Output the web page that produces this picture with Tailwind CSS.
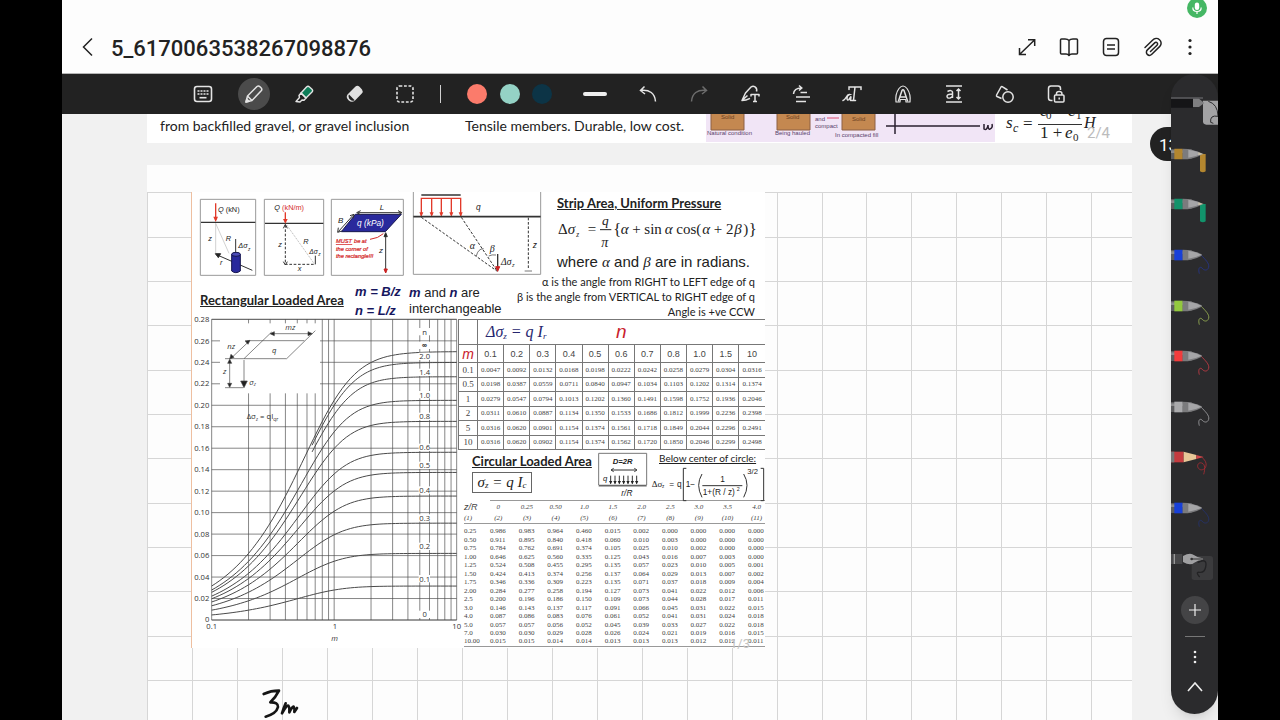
<!DOCTYPE html>
<html lang="en">

<head>
    <meta charset="UTF-8" />
    <meta name="viewport" content="width=device-width, initial-scale=1.0" />
    <script src="https://cdn.jsdelivr.net/npm/@tailwindcss/browser@4"></script>
    <title>5_6170063538267098876</title>
</head>

<body class="bg-black px-[62px] font-['Roboto',sans-serif]">
    <div class="relative flex h-screen flex-col overflow-hidden bg-[#f1f1f1]">

        <!-- Title bar -->
        <header class="relative flex h-[74px] shrink-0 items-center border-b border-[#b5b5b5] bg-[#fdfdfd] pt-5 pr-[21px] pl-3">
            <button class="flex size-7 items-center justify-center" aria-label="Back">
                <svg class="size-6" viewBox="0 0 24 24" fill="none" stroke="#222" stroke-width="1.5"><path d="M16 3.500 7.500 12l8.500 8.500" /></svg>
            </button>
            <h1 class="mt-1 ml-[9px] text-[22px] font-medium text-[#222]">5_6170063538267098876</h1>
            <div class="ml-auto flex items-center gap-[18px] text-[#222]">
                <button class="size-6" aria-label="Full screen">
                    <svg viewBox="0 0 24 24" fill="none" stroke="currentColor" stroke-width="1.5"><path d="M4.500 19.500 19.500 5M13 4.700h6.700V11M11 19.500H4.500V13" /></svg>
                </button>
                <button class="size-6" aria-label="Reading view">
                    <svg viewBox="0 0 24 24" fill="none" stroke="currentColor" stroke-width="1.500" stroke-linejoin="round"><path d="M12 5.500C11 4.300 9.500 4 8 4H4.500Q3.500 4 3.500 5v13q0 1 1 1H9q2 0 3 1.500Q13 19 15 19h4.500q1 0 1-1V5q0-1-1-1H16c-1.500 0-3 .3-4 1.500zM12 5.500v15" /></svg>
                </button>
                <button class="size-6" aria-label="Pages">
                    <svg viewBox="0 0 24 24" fill="none" stroke="currentColor" stroke-width="1.500"><rect x="4.500" y="3.500" width="15" height="17" rx="3" /><path d="M8 10h8M8 14h8" /></svg>
                </button>
                <button class="size-6" aria-label="Attach">
                    <svg viewBox="0 0 24 24" fill="none" stroke="currentColor" stroke-width="1.500" stroke-linecap="round"><path d="m4 12.500 7.500-7.300c2-2 5-2.200 7-.5s2.200 4.800.3 6.700l-8 7.800c-1.300 1.300-3.300 1.400-4.500.2s-1.200-3.200.1-4.500l7.300-7c.7-.7 1.800-.8 2.400-.1.700.7.600 1.700-.1 2.400L9.500 16.500" /></svg>
                </button>
                <button class="h-6 w-[14px]" aria-label="More options">
                    <svg class="h-6 w-[14px]" viewBox="0 0 14 24" fill="currentColor"><circle cx="7" cy="5.500" r="1.600" /><circle cx="7" cy="12" r="1.600" /><circle cx="7" cy="18.500" r="1.600" /></svg>
                </button>
            </div>
            <!-- Microphone in use -->
            <svg class="absolute -top-0.5 right-[11px] size-5" viewBox="0 0 20 20"><circle cx="10" cy="10" r="10" fill="#45b764" /><rect x="7.800" y="4.500" width="4.400" height="7.500" rx="2.200" fill="#fff" /><path d="M5.800 9.500q0 4 4.200 4t4.200-4M10 13.500V16" fill="none" stroke="#fff" stroke-width="1.200" /></svg>
        </header>

        <!-- Tools -->
        <nav class="flex h-10 shrink-0 items-center bg-[#222] pl-[125px] text-[#e4e4e4]">
            <div class="flex w-[234px] justify-between">
                <button class="flex size-8 items-center justify-center" aria-label="Keyboard">
                    <svg class="size-5" viewBox="0 0 20 20" fill="none" stroke="currentColor" stroke-width="1.600"><rect x="1.500" y="2.500" width="17" height="15" rx="2.500" /><path d="M4.500 7h11M4.500 10h11" stroke-dasharray="2 1" stroke-width="1.400" /><path d="M6.500 13.700h7" /></svg>
                </button>
                <button class="flex size-8 items-center justify-center rounded-full bg-[#4b4b4b]" aria-label="Pen">
                    <svg class="size-5" viewBox="0 0 20 20" fill="none" stroke="currentColor" stroke-width="1.500" stroke-linejoin="round"><path d="m2 18 1.500-6L13 2.500q1.500-1.200 3 .3l1 1q1.500 1.500.2 3L8 16.500zM3.500 12 8 16.500" /><path d="m2 18 .8-3 2.200 2.200z" fill="currentColor" /></svg>
                </button>
                <button class="flex size-8 items-center justify-center" aria-label="Highlighter">
                    <svg class="size-5" viewBox="0 0 20 20" stroke="currentColor" stroke-width="1.400" stroke-linejoin="round"><path d="m7 9 5.500-6q1.500-1.300 3 0L18 5.200q1.300 1.300 0 2.800l-6 6z" fill="#0d7d58" /><path d="m7 9-2 2.500.5 2L2 17.500l4 .5 2-2 2 .3 2-2.300z" fill="none" /></svg>
                </button>
                <button class="flex size-8 items-center justify-center" aria-label="Eraser">
                    <svg class="size-5" viewBox="0 0 20 20"><path d="m2.500 10.500 8-8q2-1.500 4 .3l2.500 2.700q1.500 2-.2 4l-7.300 7.500q-3 2-6-.8t-1-5.700z" fill="#e0e0e0" /><path d="m4 10.500 5.700 5.700q-2.400 1.400-4.700-.8T4 10.500z" fill="#222" /></svg>
                </button>
                <button class="flex size-8 items-center justify-center" aria-label="Select">
                    <svg class="size-5" viewBox="0 0 20 20" fill="none" stroke="currentColor" stroke-width="1.600"><rect x="2" y="2" width="16" height="16" rx="2.500" stroke-dasharray="2.800 1.700" /></svg>
                </button>
            </div>
            <span class="ml-[19px] h-[18px] w-px bg-[#d0d0d0]"></span>
            <div class="ml-[26px] flex w-[85px] justify-between">
                <button class="size-5 rounded-full bg-[#fb7b6b]" aria-label="Coral"></button>
                <button class="size-5 rounded-full bg-[#94d2c5]" aria-label="Mint"></button>
                <button class="size-5 rounded-full bg-[#0c3446]" aria-label="Navy"></button>
            </div>
            <button class="ml-[31px] h-1 w-6 rounded-full bg-[#eee]" aria-label="Thickness"></button>
            <div class="ml-[25px] flex w-[440px] justify-between">
                <button class="flex size-8 items-center justify-center" aria-label="Undo">
                    <svg class="size-5" viewBox="0 0 20 20" fill="none" stroke="currentColor" stroke-width="1.500"><path d="M6.500 2.500 2.500 6.500l4.500 3.500M2.500 6.500Q16.500 5 17.500 17.500" /></svg>
                </button>
                <button class="flex size-8 items-center justify-center text-[#6d6d6d]" aria-label="Redo">
                    <svg class="size-5" viewBox="0 0 20 20" fill="none" stroke="currentColor" stroke-width="1.500"><path d="m13.500 2.500 4 4L13 10M17.500 6.500Q3.500 5 2.500 17.500" /></svg>
                </button>
                <button class="flex size-8 items-center justify-center" aria-label="Handwriting to text">
                    <svg class="size-5" viewBox="0 0 20 20" fill="none" stroke="currentColor" stroke-width="1.500" stroke-linejoin="round"><path d="M16.500 7.500q1-3-1.500-4.700-2-1.300-4 .2L5.500 9 2 16.500q4 0 8-2.200M2 16.500l5.500-5" /><path d="M11 12.500v-2h8v2M15 10.500v7M13 17.500h4" /></svg>
                </button>
                <button class="flex size-8 items-center justify-center" aria-label="Straighten">
                    <svg class="size-5" viewBox="0 0 20 20" fill="none" stroke="currentColor" stroke-width="1.500"><path d="M2.500 10q.5-6 8-6M8 1.500 10.800 4 8 6.500M9.500 8.500H16M5 13h14M5 17.500h10" /></svg>
                </button>
                <button class="flex size-8 items-center justify-center" aria-label="Text style">
                    <svg class="size-5" viewBox="0 0 20 20" fill="none" stroke="currentColor" stroke-width="1.500" stroke-linecap="round"><path d="M7 5.500V3h12v2.500M13 3l-1.500 13.500M9.500 16.500h4" /><path d="M1 16.500q1.500-.3 3-3Q6 10 7.500 10.500 5 11 5 14q0 3 2 1.500l2-3-.5 4" /></svg>
                </button>
                <button class="flex size-8 items-center justify-center" aria-label="Outline text">
                    <svg class="size-5" viewBox="0 0 20 20" fill="none" stroke="currentColor" stroke-linejoin="round"><path d="M3 18Q2 10 6 4.500q4-5 8 0Q18 10 17 18h-4l-.3-2.500H7.300L7 18z" stroke-width="1.200" /><path d="M5.300 17.500 9 6.500q1-1.500 2 0l3.700 11M6.500 13h7" stroke-width="1.500" /></svg>
                </button>
                <button class="flex size-8 items-center justify-center" aria-label="Line spacing">
                    <svg class="size-5" viewBox="0 0 20 20" fill="none" stroke="currentColor" stroke-width="1.500"><path d="M2 2h16M2 18h16M14.500 5v10M12.500 7l2-2 2 2M12.500 13l2 2 2-2" /><path d="M3.500 7.500q4-2 5 .5v6M8.500 10q-5.500 0-5.500 2.300t3 1.700q2-.5 2.500-2" /></svg>
                </button>
                <button class="flex size-8 items-center justify-center" aria-label="Shapes">
                    <svg class="size-5" viewBox="0 0 20 20" fill="none" stroke="currentColor" stroke-width="1.500" stroke-linejoin="round"><circle cx="13" cy="13" r="5.200" /><path d="M6.500 14.500 2 12.500q-.8-.5-.4-1.500L6 3q.8-1 1.600-.2L12.500 6" /></svg>
                </button>
                <button class="flex size-8 items-center justify-center" aria-label="Lock canvas">
                    <svg class="size-5" viewBox="0 0 20 20" fill="none" stroke="currentColor" stroke-width="1.500" stroke-linejoin="round"><path d="M6.500 16.500H5q-2.500 0-2.500-2.500V4.500Q2.500 2 5 2h7q2.500 0 2.500 2.500V6" /><rect x="8.500" y="11" width="9.500" height="7" rx="1" /><path d="M10.500 11V9.500q0-2 2.700-2t2.700 2V11M13.200 13.500v2" /></svg>
                </button>
            </div>
        </nav>

        <main class="flex flex-1 flex-col gap-[22px] overflow-hidden pr-[86px] pl-[85px]">

            <!-- End of the page before -->
            <section class="flex h-[29px] shrink-0 overflow-hidden bg-white pl-[13px] font-['Lato',sans-serif] text-[14px] leading-6 text-[#222]">
                <p class="w-[305px]">from backfilled gravel, or gravel inclusion</p>
                <p class="w-[241px]">Tensile members. Durable, low cost.</p>
                <svg class="h-[29px] w-[289px]" viewBox="0 0 289 29" font-family="Liberation Sans" font-size="6" fill="#57416b">
                    <rect width="289" height="28" fill="#f1e5f6" />
                    <g fill="#c48850" stroke="#8d6044"><path d="M5 -2h33v18H5zM71 -2h33v18H71zM136 -2h33v18h-33z" /></g>
                    <g fill="#6b3f21"><text x="15" y="5">Solid</text><text x="80" y="5">Solid</text><text x="146" y="7">Solid</text></g>
                    <text x="1" y="21">Natural condition</text>
                    <text x="69" y="21">Being hauled</text>
                    <text x="109" y="7">and</text>
                    <text x="109" y="14">compact</text>
                    <text x="129" y="23">In compacted fill</text>
                    <path d="M121 4h12" stroke="#dc4c72" />
                    <path d="M189 0v20M180 12h94" fill="none" stroke="#2a2030" stroke-width="1.500" />
                    <path d="M278 10v5q3 2 4-4 0 5 2 4 3-1 2-5" fill="none" stroke="#2a2030" stroke-width="1.500" />
                </svg>
                <svg class="h-[29px] w-[118px]" viewBox="0 0 118 29" font-family="Liberation Serif" font-size="17" fill="#222">
                    <text x="11" y="14" font-style="italic">s</text><text x="18" y="18" font-style="italic" font-size="12">c</text><text x="28" y="15">=</text>
                    <path d="M43 10.500h44" stroke="#333" />
                    <text x="45" y="2" font-style="italic">e</text><text x="51" y="5" font-size="11">0</text>
                    <text x="73" y="2" font-style="italic">e</text><text x="81" y="5" font-size="11">1</text>
                    <text x="45" y="24">1 +</text><text x="70" y="24" font-style="italic">e</text><text x="78" y="27" font-size="11">0</text>
                    <text x="89" y="14" font-size="16" font-style="italic">H</text>
                    <text x="92" y="24" font-size="15" font-family="Roboto" fill="#bcbcbc">2/4</text>
                </svg>
            </section>

            <!-- Ruled page -->
            <section class="relative flex-1 overflow-hidden bg-[#fdfdfd] pt-[27px] pl-[44px]">
                <svg class="absolute inset-0 h-full w-full" fill="none" stroke="#d6d6d6">
                    <path d="M0 27.500H2000M0 72.500H2000M0 116.500H2000M0 160.500H2000M0 205.500H2000M0 249.500H2000M0 293.500H2000M0 338.500H2000M0 382.500H2000M0 426.500H2000M0 471.500H2000M0 515.500H2000" />
                    <path d="M.5 27V900M45.500 27V900M90.500 27V900M135.500 27V900M180.500 27V900M225.500 27V900M270.500 27V900M315.500 27V900M360.500 27V900M405.500 27V900M450.500 27V900M495.500 27V900M540.500 27V900M585.500 27V900M630.500 27V900M675.500 27V900M719.500 27V900M764.500 27V900M809.500 27V900M854.500 27V900M899.500 27V900M944.500 27V900" />
                </svg>

                <article class="relative h-[456px] w-[574px] border-l border-[#eebfa0] bg-white font-['Liberation_Sans',sans-serif] text-[#222]">
                    <div class="flex h-[82px]">
                        <!-- Point, line and rectangular loads -->
                        <svg class="h-[84px] w-[216px]" viewBox="6 21 648 252" fill="none" stroke="#333" stroke-width="3" font-size="22">
                            <g stroke="#999"><path d="M31 43h166v228H31zM223 43h178v228H223zM424 43h216v228H424z" /></g>
                            <path d="M33 112h163M225 115h175" stroke-width="4" />
                            <path d="M77 55v50" stroke="#e23a2a" stroke-width="4" /><path d="m70 95 7 16 7-16z" fill="#e23a2a" stroke="none" />
                            <path d="M77 115v90M77 115l40 90" stroke="#bbb" stroke-width="2" />
                            <path d="m82 210 105 46M137 162v50" /><path d="m76 206 16 0-7 12z" fill="#222" />
                            <path d="M125 208v50q12 10 26 0v-50z" fill="#29299c" stroke="#16164e" /><ellipse cx="138" cy="208" rx="13" ry="6" fill="#4c4cb8" stroke="#16164e" />
                            <path d="M286 82v28" stroke="#e23a2a" stroke-width="4" /><path d="m279 102 7 14 7-14z" fill="#e23a2a" stroke="none" />
                            <path d="M286 120v118h90" stroke-dasharray="8 5" /><path d="m290 120 84 118" stroke="#888" stroke-width="2" stroke-dasharray="3 3" /><path d="M376 212v26M280 130l6-12 6 12M280 230l6 10 6-10" />
                            <path d="M496 88h138l-48 52H454z" fill="#29299c" stroke="#16164e" />
                            <path d="M503 83h130M490 90l-45 50" /><path d="m512 77-12 6 12 6M624 77l12 6-12 6M480 92l12-4-2 12M445 128l-2 14 12-4" />
                            <path d="M587 145v118" /><path d="m582 155 5-12 5 12z" fill="#222" /><path d="m582 252 5 12 5-12z" fill="#c22" stroke="#c22" />
                            <path d="M540 163q25-3 40-17" stroke="#d42a2a" />
                            <g fill="#222" stroke="none" font-style="italic">
                                <text x="84" y="80">Q <tspan font-style="normal">(kN)</tspan></text><text x="55" y="168">z</text><text x="107" y="169">R</text><text x="145" y="190">Δσ</text><text x="174" y="197" font-size="14">z</text><text x="90" y="240">r</text>
                                <text x="253" y="75">Q <tspan fill="#d42a2a" font-style="normal">(kN/m)</tspan></text><text x="265" y="187">z</text><text x="340" y="178">R</text><text x="358" y="207" font-size="20">Δσ</text><text x="385" y="212" font-size="14">z</text><text x="323" y="258">x</text>
                                <text x="569" y="74" font-size="24">L</text><text x="444" y="113" font-size="24">B</text><text x="501" y="124" fill="#fff" font-size="25">q (kPa)</text><text x="567" y="205" font-size="24">z</text>
                            </g>
                            <g fill="#d42a2a" stroke="#d42a2a" stroke-width=".7" font-size="17" font-style="italic"><text x="438" y="175" text-decoration="underline">MUST</text><text x="492" y="175">be at</text><text x="438" y="197">the corner of</text><text x="438" y="219">the rectangle!!!</text></g>
                        </svg>
                        <!-- Strip load -->
                        <svg class="ml-1 h-[84px] w-[130px]" viewBox="24 21 390 252" fill="none" stroke="#333" stroke-width="3" font-family="Liberation Sans" font-size="25">
                            <path d="M28 21v247h382V21" stroke="#999" />
                            <path d="M52 30h118" stroke-width="4" />
                            <path d="M52 95V40h118v55M83 40v50M112 40v50M142 40v50" stroke="#e23a2a" stroke-width="4" />
                            <path d="m46 82 6 14 6-14zM77 82l6 14 6-14zM106 82l6 14 6-14zM136 82l6 14 6-14zM164 82l6 14 6-14z" fill="#e23a2a" stroke="none" />
                            <path d="M28 95h382" stroke-width="5" />
                            <path d="m52 97 228 162M172 97l108 162M373 98v155" stroke-dasharray="8 5" /><path d="M362 258h22M217 213q5-22 22-22M254 213q10-5 22-3" stroke-width="2" />
                            <path d="M281 207v40" stroke-width="4" /><path d="m275 245 6 14 6-14z" fill="#c22" stroke="#c22" />
                            <g fill="#222" stroke="none" font-style="italic"><text x="216" y="76">q</text><text x="386" y="188">z</text><text x="197" y="192" font-family="Liberation Serif" font-size="30">α</text><text x="257" y="200" font-family="Liberation Serif" font-size="30">β</text><text x="291" y="240" font-family="Liberation Serif" font-size="29">Δσ</text><text x="324" y="246" font-size="15">z</text></g>
                        </svg>
                        <div class="ml-[15px] w-[200px] shrink-0">
                            <h2 class="font-['Lato',sans-serif] text-[13px] leading-[22px] font-bold whitespace-nowrap underline">Strip Area, Uniform Pressure</h2>
                            <svg class="h-[36px] w-[204px]" viewBox="455 86 612 108" fill="#222" font-family="Liberation Serif" font-size="45">
                                <text x="458" y="146">Δ<tspan font-style="italic">σ</tspan></text><text x="513" y="156" font-size="22" font-style="italic">z</text><text x="547" y="146">=</text>
                                <text x="590" y="118" font-size="40" font-style="italic">q</text><path d="M584 133h34" stroke="#222" stroke-width="3" /><text x="588" y="184" font-size="42" font-style="italic">π</text>
                                <text x="624" y="148" font-size="50">{</text><text x="646" y="146" font-style="italic">α</text><text x="681" y="146">+</text><text x="717" y="146">sin</text><text x="778" y="146" font-style="italic">α</text><text x="813" y="146">cos(</text><text x="891" y="146" font-style="italic">α</text><text x="925" y="146">+</text><text x="962" y="146">2</text><text x="987" y="146" font-style="italic">β</text><text x="1014" y="146">)</text><text x="1030" y="148" font-size="50">}</text>
                            </svg>
                            <p class="text-[15px] leading-6 whitespace-nowrap">where <i class="font-['Liberation_Serif',serif]">α</i> and <i class="font-['Liberation_Serif',serif]">β</i> are in radians.</p>
                        </div>
                    </div>

                    <div class="flex h-[45px]">
                        <div class="flex items-center pt-2 pl-2 whitespace-nowrap">
                            <h2 class="w-[155px] font-['Lato',sans-serif] text-[13px] font-bold underline">Rectangular Loaded Area</h2>
                            <p class="w-[54px] text-[13px] leading-[19px] font-bold text-[#16165e] italic">m = B/z<br />n = L/z</p>
                            <p class="w-[90px] text-[13px] leading-[16px]"><b class="text-[#16165e] italic">m</b> and <b class="text-[#16165e] italic">n</b> are<br />interchangeable</p>
                        </div>
                        <p class="ml-auto pr-[10px] text-right font-['Lato',sans-serif] text-[11px] leading-[15px] whitespace-nowrap">α is the angle from RIGHT to LEFT edge of q<br />β is the angle from VERTICAL to RIGHT edge of q<br />Angle is +ve CCW</p>
                    </div>

                    <div class="flex">
                        <svg id="chart" class="h-[329px] w-[266px] overflow-visible" viewBox="6 27 798 987" fill="none" stroke="#4a4a4a" stroke-width="2" font-family="Open Sans" font-size="23"></svg>

                        <div class="w-[307px]">
                            <table class="h-[131px] w-full table-fixed border-collapse text-center font-['Liberation_Serif',serif] text-[7px] leading-[10px] text-[#444]">
                                <thead>
                                    <tr class="h-[25px]">
                                        <td class="w-[19px] border border-[#777]"></td>
                                        <td colspan="11" class="border-y border-[#777] font-['Liberation_Sans',sans-serif]">
                                            <div class="flex items-center pl-2 text-[16px] leading-5 italic">
                                                <span class="w-[130px] text-left font-['Liberation_Serif',serif] text-[#26266e]">Δσ<sub class="text-[9px]">z</sub> = q I<sub class="text-[9px]">r</sub></span>
                                                <span class="text-[19px] text-[#c9202c]">n</span>
                                            </div>
                                        </td>
                                    </tr>
                                    <tr id="rect-head" class="h-[18px] font-['Liberation_Sans',sans-serif] text-[9px]"></tr>
                                </thead>
                                <tbody id="rect-body"></tbody>
                            </table>

                            <div class="flex h-[50px]">
                                <div class="w-[137px] pl-[14px]">
                                    <h2 class="font-['Lato',sans-serif] text-[13px] leading-[22px] font-bold whitespace-nowrap underline">Circular Loaded Area</h2>
                                    <p class="flex h-[21px] w-[60px] items-center justify-center border border-[#666] font-['Liberation_Serif',serif] text-[15px] whitespace-nowrap italic">σ<sub class="text-[9px]">z</sub>&nbsp;= q I<sub class="text-[9px]">c</sub></p>
                                </div>
                                <svg class="h-[50px] w-[56px]" viewBox="420 0 168 150" fill="none" stroke="#333" stroke-width="3" font-family="Liberation Sans" font-size="23" font-style="italic">
                                    <path d="M431 105V10h144v95" stroke="#777" /><path d="M431 107h144" stroke-width="5" stroke="#666" />
                                    <path d="M470 60h72" /><path d="m476 55-8 5 8 5M538 55l8 5-8 5" />
                                    <path d="M467 77v24M480 77v24M493 77v24M506 77v24M519 77v24M532 77v24M545 77v24" />
                                    <path d="m462 93 5 10 5-10zM475 93l5 10 5-10zM488 93l5 10 5-10zM501 93l5 10 5-10zM514 93l5 10 5-10zM527 93l5 10 5-10zM540 93l5 10 5-10z" fill="#222" stroke="none" />
                                    <g fill="#222" stroke="none"><text x="473" y="43" font-weight="bold">D=2R</text><text x="444" y="92">q</text><text x="499" y="138" font-size="25">r/R</text></g>
                                </svg>
                                <div class="w-[114px] shrink-0">
                                    <h3 class="pl-2 font-['Lato',sans-serif] text-[10px] leading-[17px] whitespace-nowrap underline">Below center of circle:</h3>
                                    <svg class="h-[36px] w-[114px]" viewBox="588 46 342 108" fill="#222" font-family="Liberation Sans" font-size="25">
                                        <text x="590" y="105" font-family="Liberation Serif" font-size="27">Δσ</text><text x="621" y="110" font-size="14">z</text><text x="643" y="105">=</text><text x="666" y="105">q</text>
                                        <path d="M694 50h-9v97h9M917 50h9v97h-9M741 67q-20 33 0 70M866 67q20 33 0 70M742 102h120" fill="none" stroke="#333" stroke-width="3" />
                                        <text x="692" y="105">1−</text><text x="796" y="90">1</text><text x="743" y="130">1+(R / z)</text><text x="845" y="118" font-size="16">2</text><text x="877" y="68" font-size="23">3/2</text>
                                    </svg>
                                </div>
                            </div>

                            <div class="pl-[6px]">
                                <table class="w-full table-fixed border-collapse border-b border-[#999] text-left font-['Liberation_Serif',serif] text-[7px] leading-[8px] text-[#444]">
                                    <thead id="circle-head" class="italic"></thead>
                                    <tbody id="circle-body" class="before:block before:h-[3px]"></tbody>
                                </table>
                            </div>
                        </div>
                    </div>
                    <span class="absolute right-[15px] -bottom-1 font-['Roboto',sans-serif] text-[13px] leading-4 text-[#c4c4c4]">1/3</span>
                </article>

                <!-- Handwriting -->
                <svg class="relative mt-10 ml-[70px] h-8 w-10" viewBox="363 144 120 96" fill="none" stroke="#151515" stroke-width="8" stroke-linecap="round" stroke-linejoin="round"><path d="M371 162q22-10 46-10-10 20-26 35 24-1 23 14-5 20-37 29" /><path d="M437 190q-6 14-11 30 14-26 19-23 4 4 3 20 8-16 13-17 4 6 2 16l8-12" /></svg>
            </section>
        </main>

        <!-- Page number -->
        <span class="absolute top-[127px] right-[30px] h-[34px] w-[38px] rounded-full bg-[#222] pl-[9px] text-[17px] leading-9 text-white">13</span>

        <!-- Favourite pens -->
        <aside class="absolute top-[74px] right-0 flex h-[640px] w-[47px] flex-col items-center overflow-hidden rounded-t-3xl rounded-b-[24px] bg-[#2b2b2d] pt-1 text-[#eee] shadow-lg">
            <div id="pens" class="grid h-[506px] w-full shrink-0 grid-rows-10"></div>
            <button class="mt-3 flex size-7 shrink-0 items-center justify-center rounded-full bg-[#444446]" aria-label="Add pen">
                <svg class="size-3" viewBox="0 0 12 12" stroke="currentColor" stroke-width="1.200"><path d="M0 6h12M6 0v12" /></svg>
            </button>
            <span class="mt-3 h-px w-5 shrink-0 bg-[#777]"></span>
            <button class="mt-2.5 size-5 shrink-0" aria-label="More pens">
                <svg viewBox="0 0 20 20" fill="currentColor"><circle cx="10" cy="5" r="1.300" /><circle cx="10" cy="10" r="1.300" /><circle cx="10" cy="15" r="1.300" /></svg>
            </button>
            <button class="mt-2.5 size-5 shrink-0" aria-label="Collapse">
                <svg viewBox="0 0 20 20" fill="none" stroke="currentColor" stroke-width="1.600"><path d="m3 14 7-8 7 8" /></svg>
            </button>
        </aside>
    </div>

    <script>
        // Influence factor under the corner of a rectangle
        function influence(m, n) {
            const a = m * m, b = n * n, v = a + b + 1;
            const t = 2 * m * n * Math.sqrt(v);
            return (t / (v + a * b) * (v + 1) / v + Math.atan2(t, v - a * b)) / (4 * Math.PI);
        }

        const px = m => 65 + (Math.log10(m) + 1) * 367.5;
        const py = i => 930 - i * 3221;

        function drawChart() {
            let html = '<path d="M65 28H800V930H65z" />';
            const text = (x, y, s, more = '') => `<text x="${x}" y="${y}" fill="#333" stroke="none" ${more}>${s}</text>`;

            for (let k = 0; k <= 14; k++) {
                const y = py(k * 0.02);
                html += text(58, y + (k ? 8 : 5), k ? (k * 0.02).toFixed(2) : '0', 'text-anchor="end"');
                html += k > 10 && k < 14 ? `<path d="M65 ${y}h25M390 ${y}H800" />` : `<path d="M65 ${y}H800" />`;
            }
            for (let d = 2; d < 10; d++) {
                const x = px(d / 10);
                html += d < 8 ? `<path d="M${x} 28v12M${x} 250V930" />` : `<path d="M${x} 28V930" />`;
                html += `<path d="M${px(d)} 28V930" />`;
            }
            html += `<path d="M${px(1)} 28V930" />`;

            [0.1, 0.2, 0.3, 0.4, 0.5, 0.6, 0.8, 1, 1.4, 2, 1000].forEach(n => {
                const from = n === 1.4 || n === 2 ? 0.66 : 0.1;
                const points = [];
                for (let s = 0; s <= 60; s++) {
                    const m = from * Math.pow(10 / from, s / 60);
                    points.push(`${px(m).toFixed(1)},${py(influence(m, n)).toFixed(1)}`);
                }
                html += `<polyline points="${points.join(' ')}" stroke-width="3" />`;
            });

            [['n', 66], ['∞', 107], ['2.0', 140], ['1.4', 188], ['1.0', 255], ['0.8', 320], ['0.6', 413], ['0.5', 467], ['0.4', 541], ['0.3', 625], ['0.2', 710], ['0.1', 807], ['0', 914]].forEach(([s, y]) => {
                html += `<path d="M686 ${y - 12}h34v22h-34z" fill="#fff" stroke="none" />` + text(704, y + 8, s, `text-anchor="middle" ${s === '∞' ? 'font-weight="bold"' : ''}`);
            });

            html += text(65, 958, '0.1', 'text-anchor="middle"') + text(435, 958, '1', 'text-anchor="middle"') + text(800, 958, '10', 'text-anchor="middle"');
            html += text(434, 993, 'm', 'text-anchor="middle" font-style="italic"');

            // Loaded rectangle
            html += '<path d="M105 146h185L376 62M162 146l83-80M165 92h178M245 71h118M122 146l55-52M119 150v80M162 150v75M105 233h55" />';
            html += '<path d="m240 71 13-6v12zM367 71l-13-6v12zM119 147l4-14 9 9zM180 91l-14 3 8 9zM119 148l-6 12h12zM119 232l-6-12h12zM162 233l-10-20h20z" fill="#222" />';
            html += text(286, 60, 'mz', 'font-style="italic"') + text(112, 117, 'nz', 'font-style="italic"') + text(246, 130, 'q', 'font-style="italic"') + text(99, 192, 'z', 'font-style="italic"') + text(178, 224, 'σ<tspan font-size="15" dy="4">z</tspan>', 'font-style="italic"');
            html += text(170, 328, 'Δσ<tspan font-size="15" dy="4">z</tspan><tspan dy="-4"> = qI</tspan><tspan font-size="15" dy="4">qr</tspan>');
            document.getElementById('chart').innerHTML = html;
        }

        const rectRows = [
            '0.1 0.0047 0.0092 0.0132 0.0168 0.0198 0.0222 0.0242 0.0258 0.0279 0.0304 0.0316',
            '0.5 0.0198 0.0387 0.0559 0.0711 0.0840 0.0947 0.1034 0.1103 0.1202 0.1314 0.1374',
            '1 0.0279 0.0547 0.0794 0.1013 0.1202 0.1360 0.1491 0.1598 0.1752 0.1936 0.2046',
            '2 0.0311 0.0610 0.0887 0.1134 0.1350 0.1533 0.1686 0.1812 0.1999 0.2236 0.2398',
            '5 0.0316 0.0620 0.0901 0.1154 0.1374 0.1561 0.1718 0.1849 0.2044 0.2296 0.2491',
            '10 0.0316 0.0620 0.0902 0.1154 0.1374 0.1562 0.1720 0.1850 0.2046 0.2299 0.2498'
        ];

        const circleRows = [
            '0.25 0.986 0.983 0.964 0.460 0.015 0.002 0.000 0.000 0.000 0.000',
            '0.50 0.911 0.895 0.840 0.418 0.060 0.010 0.003 0.000 0.000 0.000',
            '0.75 0.784 0.762 0.691 0.374 0.105 0.025 0.010 0.002 0.000 0.000',
            '1.00 0.646 0.625 0.560 0.335 0.125 0.043 0.016 0.007 0.003 0.000',
            '1.25 0.524 0.508 0.455 0.295 0.135 0.057 0.023 0.010 0.005 0.001',
            '1.50 0.424 0.413 0.374 0.256 0.137 0.064 0.029 0.013 0.007 0.002',
            '1.75 0.346 0.336 0.309 0.223 0.135 0.071 0.037 0.018 0.009 0.004',
            '2.00 0.284 0.277 0.258 0.194 0.127 0.073 0.041 0.022 0.012 0.006',
            '2.5 0.200 0.196 0.186 0.150 0.109 0.073 0.044 0.028 0.017 0.011',
            '3.0 0.146 0.143 0.137 0.117 0.091 0.066 0.045 0.031 0.022 0.015',
            '4.0 0.087 0.086 0.083 0.076 0.061 0.052 0.041 0.031 0.024 0.018',
            '5.0 0.057 0.057 0.056 0.052 0.045 0.039 0.033 0.027 0.022 0.018',
            '7.0 0.030 0.030 0.029 0.028 0.026 0.024 0.021 0.019 0.016 0.015',
            '10.00 0.015 0.015 0.014 0.014 0.013 0.013 0.013 0.012 0.012 0.011'
        ];

        function fillTables() {
            document.getElementById('rect-head').innerHTML =
                '<th class="border border-[#777] text-[14px] font-normal text-[#c9202c] italic">m</th>' +
                '0.1 0.2 0.3 0.4 0.5 0.6 0.7 0.8 1.0 1.5 10'.split(' ').map(n => `<th class="border border-r-0 border-[#777] font-medium">${n}</th>`).join('');
            document.getElementById('rect-body').innerHTML = rectRows.map(row => '<tr>' + row.split(' ').map((v, i) =>
                i ? `<td class="border border-r-0 border-[#777]">${v}</td>` : `<th class="border border-[#777] text-[9px] font-normal">${v}</th>`).join('') + '</tr>').join('');

            const heads = '0 0.25 0.50 1.0 1.5 2.0 2.5 3.0 3.5 4.0'.split(' ');
            document.getElementById('circle-head').innerHTML =
                '<tr class="h-[12px]"><th class="w-[26px] font-[\'Liberation_Sans\',sans-serif] text-[9px] font-normal">z/R</th>' +
                heads.map((h, i) => `<th class="border-t border-[#999] text-center font-normal ${i === 9 ? 'w-[17px]' : 'pr-3'}">${h}</th>`).join('') + '</tr>' +
                '<tr class="h-[11px] border-b border-[#999]">' + [1, 2, 3, 4, 5, 6, 7, 8, 9, 10, 11].map(i => `<th class="font-normal ${i === 1 ? '' : i === 11 ? 'text-center' : 'pr-3 text-center'}">(${i})</th>`).join('') + '</tr>';
            document.getElementById('circle-body').innerHTML = circleRows.map((row, r) =>
                `<tr class="${r % 2 ? 'h-[9px]' : 'h-[8px]'}">` + row.split(' ').map(v => `<td>${v}</td>`).join('') + '</tr>').join('');
        }

        const squiggle = c => `<path d="M90 75C102 88 116 100 113 112 109 124 98 121 93 114 88 109 80 112 85 131" fill="none" stroke="${c}" stroke-width="2.500" />`;
        const body = c => `<path d="M0 60h62v30H0z" fill="#5c5c5e" /><path d="M0 64h62v8H0z" fill="#8b8b8d" /><path d="M10 59h25v32H10z" fill="${c}" /><path d="M35 59q32 0 57 14v4Q67 91 35 91z" fill="#7b7b7d" /><path d="M52 62q22 3 40 12-18 9-40 12z" fill="#a5a5a7" />`;
        const tip = c => `<path d="M87 75h17v52q-8 6-17 0z" fill="${c}" />` + body(c) + `<path d="m82 70 16 5-16 4z" fill="#c9c0a8" />`;

        function drawPens() {
            const pens = [
                '<path d="M96 68h45v72h-35q-10 0-10-10z" fill="#a2a2a4" /><path d="M112 70q28 8 29 44M141 115q-25-5-22 18l8 3" fill="none" stroke="#2b2b2d" stroke-width="3" /><path d="M0 62h66v27H0z" fill="#151517" /><path d="M0 60h96" stroke="#77777a" stroke-width="3" /><path d="M66 62h18l16 13-16 12H66z" fill="#7e7e80" />',
                tip('#b3862f'),
                tip('#12936b'),
                squiggle('#25358c') + body('#1840d8'),
                squiggle('#9ab254') + body('#93c83e'),
                squiggle('#c83c46') + body('#f23c3c'),
                squiggle('#a0a0a2') + body('#aaaaac'),
                '<path d="M92 75c25 20 10 42-4 38-14-6-8-24 4-20s10 20 6 34" fill="none" stroke="#a82c34" stroke-width="2.500" /><path d="M0 59h38v32H0z" fill="#c53b3f" /><path d="M0 59h10v32H0z" fill="#777" /><path d="m38 59 38 10v12L38 91z" fill="#e8c898" /><path d="m76 69 22 6-22 6z" fill="#d0474a" />',
                squiggle('#24336f') + body('#1840d8'),
                '<rect x="62" y="66" width="64" height="72" rx="8" fill="#3b3b3d" /><path d="M80 85q30-14 24 14-4 18-18 16t0 14" fill="none" stroke="#232325" stroke-width="4" /><path d="M0 60h34v30H0z" fill="#48484a" /><path d="M8 60h4v30H8z" fill="#999" /><path d="M36 66q22-12 34-2 10 8 25 9v4q-15 1-25 9-12 10-34-2z" fill="#a0a0a2" /><path d="M64 75h30" stroke="#333" stroke-width="3" /><circle cx="62" cy="75" r="4" fill="#333" />'
            ];
            document.getElementById('pens').innerHTML = pens.map((p, i) =>
                `<button aria-label="Pen ${i + 1}"><svg class="h-[50px] w-[47px]" viewBox="0 0 141 150">${p}</svg></button>`).join('');
        }

        drawChart();
        fillTables();
        drawPens();
    </script>
</body>

</html>
